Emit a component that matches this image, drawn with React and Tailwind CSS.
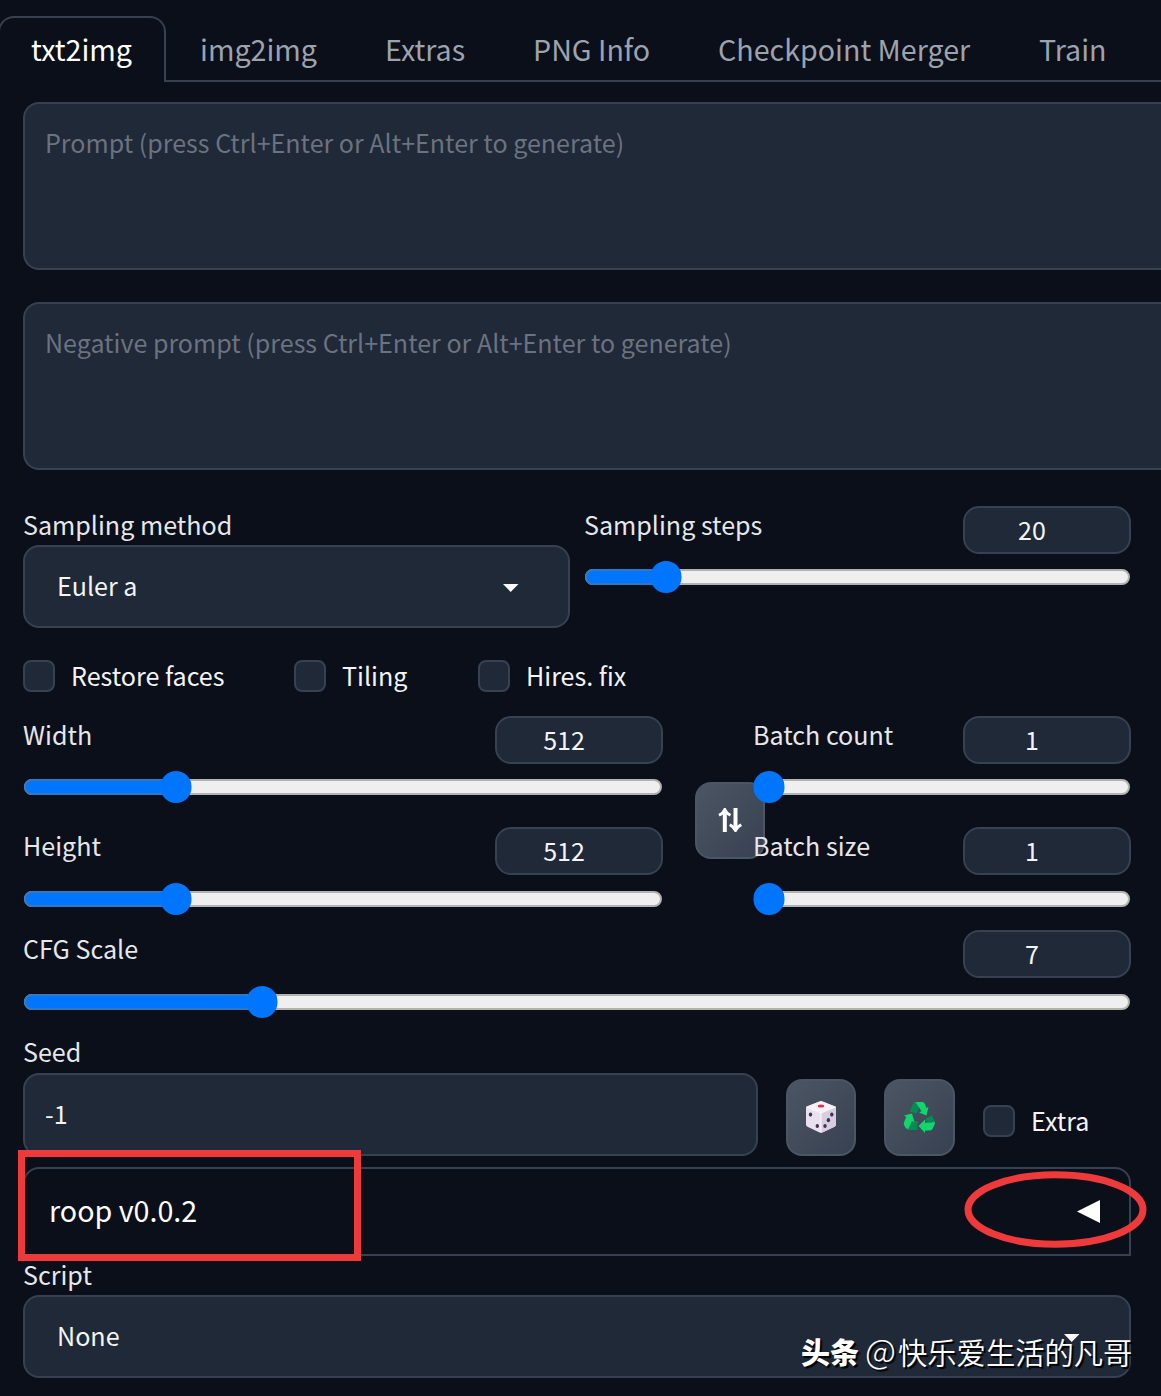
const tabs = [
  ['img2img', 'ml-[34px] w-[118px]'],
  ['Extras', 'ml-[67px] w-[80px]'],
  ['PNG Info', 'ml-[68px] w-[117px]'],
  ['Checkpoint Merger', 'ml-[68px] w-[252px]'],
  ['Train', 'ml-[69px] w-[67px]'],
];

const Label = ({ children, className = '' }) => (
  <div className={`h-9 whitespace-nowrap text-[25.08px] leading-9 text-[#e5e7eb] ${className}`}>{children}</div>
);

const NumberBox = ({ value }) => (
  <div className="flex h-12 w-[168px] shrink-0 justify-center rounded-2xl border-2 border-[#374151] bg-[#1f2937] pr-[30px] text-[25px] leading-[42px] text-[#f3f4f6]">
    {value}
  </div>
);

const Track = ({ thumb }) => (
  <div className="relative mx-px flex h-4 items-center">
    <div className="relative h-4 w-full overflow-hidden rounded-full border-2 border-[#b2b2b2] bg-[#efefef]" />
    <div className="absolute left-0 h-4 rounded-l-full border-2 border-r-0 border-[#3277c4] bg-[#0075ff]" style={{ width: thumb }} />
    <div className="absolute -top-2 h-8 w-[31px] -translate-x-1/2 rounded-full bg-[#0075ff]" style={{ left: thumb }} />
  </div>
);

const Slider = ({ label, value, thumb, gap = 'mt-[15px]' }) => (
  <div>
    <div className="flex h-12 justify-between">
      <Label>{label}</Label>
      <NumberBox value={value} />
    </div>
    <div className={gap}>
      <Track thumb={thumb} />
    </div>
  </div>
);

const Check = ({ label, className = '' }) => (
  <div className={`flex h-8 gap-4 ${className}`}>
    <div className="size-8 shrink-0 rounded-lg border-2 border-[#374151] bg-[#1f2937]" />
    <span className="whitespace-nowrap text-[25.08px] leading-[30px] text-[#f3f4f6]">{label}</span>
  </div>
);

const ToolButton = ({ children, className = '' }) => (
  <div className={`flex h-[77px] w-[70px] shrink-0 items-center justify-center rounded-2xl border-2 border-[#4b5563] bg-linear-to-br from-[#4b5563] to-[#374151] pb-[2px] ${className}`}>
    {children}
  </div>
);

const Caret = () => (
  <svg className="mt-[3px]" width="16" height="8" viewBox="0 0 16 8" fill="#f9fafb"><path d="M0 0h15.500L7.700 8z" /></svg>
);

const Dropdown = ({ value }) => (
  <div className="flex h-[83px] items-center justify-between rounded-2xl border-2 border-[#374151] bg-[#1f2937] pr-[49px] pl-8 text-[25.08px] text-[#f3f4f6]">
    <span className="pb-[2px]">{value}</span>
    <Caret />
  </div>
);

const Swap = () => (
  <svg width="24" height="24" viewBox="0 0 24 24" fill="none" stroke="#fff">
    <path d="M6.800 24V2M17.500 0V22" strokeWidth="4" />
    <path d="M1 7.200Q5.500 5 6.800 1.400Q8.100 5 12.500 7.200M11.700 16.800Q16 19 17.500 22.600Q18.900 19 23.300 16.800" strokeWidth="2.800" />
  </svg>
);

const Dice = () => (
  <svg width="32" height="34" viewBox="0 0 32 34">
    <path d="M14.500 1.500Q16 .8 17.500 1.500L29.800 6.300Q31 6.800 31 8V24.500Q31 26 29.500 26.700L17.500 32.500Q16 33.200 14.500 32.500L2.500 26.700Q1 26 1 24.500V8Q1 6.800 2.200 6.300Z" fill="#e9e1f0" />
    <path d="M31 8V24.500Q31 26 29.500 26.700L16 33V13L30.500 6.800Z" fill="#d8cee2" />
    <path d="M14.500 1.500Q16 .8 17.500 1.500L30.500 6.700L16 13L1.500 6.700Z" fill="#f6f1f8" />
    <path d="M1.500 7L16 13L30.500 7M16 13V32" stroke="#fbf8fd" strokeWidth="1" fill="none" />
    <ellipse cx="16" cy="6" rx="3.200" ry="1.500" fill="#dc3443" />
    <g fill="#40364c">
      <ellipse cx="5.500" cy="14.600" rx="1.700" ry="2.100" />
      <ellipse cx="12.300" cy="26" rx="1.700" ry="2.100" />
      <ellipse cx="26.800" cy="14.600" rx="1.700" ry="2.100" />
      <ellipse cx="23.400" cy="20.200" rx="1.700" ry="2.100" />
      <ellipse cx="20" cy="26" rx="1.700" ry="2.100" />
    </g>
  </svg>
);

const Recycle = () => (
  <svg className="mr-px" width="32" height="32" viewBox="0 0 32 32">
    <g fill="#078a56">
      <path d="M11.500 1H19L13.500 12.500L6.500 10.500L10 3Q10.500 1 11.500 1Z" />
      <path d="M1 22L3 20L5 24L7.500 20H14.500V29H6Q3.500 29 2.300 27Z" />
      <path d="M22.500 18L29 14L31.300 20Q32 22 31 24L29 25.500L25 23Z" />
    </g>
    <g fill="#10d66c">
      <path d="M12.500 1H19.500Q21 1 22 3L23.500 7L25.500 6L23.500 14.500L16 11.500L18.500 10.200Z" />
      <path d="M1 14.500L9 12.500L11.500 21L9 20L5 28.300Q3 28 1.300 24.500Q.3 22.500 1.300 20.500L3.300 16Z" />
      <path d="M15.500 25L22 18.500V21.700H28.500L31.700 20.500Q32.200 22.700 31.200 24.500L29.500 28Q28.500 29.500 26 29.500H22V32Z" />
    </g>
  </svg>
);

export default function App() {
  return (
    <div className="relative h-[1396px] w-[1161px] overflow-hidden bg-[#0b0f19] font-['Noto_Sans_CJK_SC',sans-serif]">
      <nav className="flex h-[82px] pt-4 text-[28.65px] leading-[66px]">
        <div className="-ml-[2px] h-[66px] w-[168px] shrink-0 rounded-t-2xl border-2 border-b-0 border-[#374151] pl-[31px] leading-[62px] text-white">txt2img</div>
        <div className="flex h-[66px] flex-1 border-b-2 border-[#374151] leading-[66px] text-[#9ca3af]">
          {tabs.map(([name, cls]) => (
            <div key={name} className={`shrink-0 whitespace-nowrap ${cls}`}>{name}</div>
          ))}
        </div>
      </nav>

      <div className="pl-[23px]">
        <div className="mt-5 h-[168px] rounded-l-2xl border-2 border-r-0 border-[#374151] bg-[#1f2937] pt-5 pl-5 text-[25.05px] leading-9 text-[#6b7280]">
          Prompt (press Ctrl+Enter or Alt+Enter to generate)
        </div>
        <div className="mt-8 h-[168px] rounded-l-2xl border-2 border-r-0 border-[#374151] bg-[#1f2937] pt-5 pl-5 text-[25.05px] leading-9 text-[#6b7280]">
          Negative prompt (press Ctrl+Enter or Alt+Enter to generate)
        </div>
      </div>

      <main className="ml-[23px] w-[1108px]">
        <section className="mt-9 flex h-[122px] gap-[14px]">
          <div className="w-[547px]">
            <Label className="mb-[3px]">Sampling method</Label>
            <Dropdown value="Euler a" />
          </div>
          <div className="w-[547px]">
            <Slider label="Sampling steps" value="20" thumb={81} />
          </div>
        </section>

        <section className="mt-8 flex">
          <Check label="Restore faces" className="w-[271px]" />
          <Check label="Tiling" className="w-[184px]" />
          <Check label="Hires. fix" />
        </section>

        <section className="mt-6 flex h-[192px]">
          <div className="flex w-[640px] flex-col gap-8">
            <Slider label="Width" value="512" thumb={152} />
            <Slider label="Height" value="512" thumb={152} gap="mt-4" />
          </div>
          <ToolButton className="mt-[66px] ml-8"><Swap /></ToolButton>
          <div className="relative -ml-3 flex w-[378px] flex-col gap-8">
            <Slider label="Batch count" value="1" thumb={15} />
            <Slider label="Batch size" value="1" thumb={15} gap="mt-4" />
          </div>
        </section>

        <section className="mt-[22px]">
          <Slider label="CFG Scale" value="7" thumb={238} gap="mt-4" />
        </section>

        <section className="mt-[23px] flex h-[123px]">
          <div className="w-[735px]">
            <Label className="mb-1">Seed</Label>
            <div className="h-[83px] rounded-2xl border-2 border-[#374151] bg-[#1f2937] pl-5 text-[25px] leading-[77px] text-[#f3f4f6]">-1</div>
          </div>
          <ToolButton className="mt-[46px] ml-7"><Dice /></ToolButton>
          <ToolButton className="mt-[46px] ml-7 w-[71px]"><Recycle /></ToolButton>
          <Check label="Extra" className="mt-[72px] ml-7" />
        </section>

        <section className="mt-[11px] flex h-[89px] items-center justify-between rounded-t-2xl border-2 border-[#374151] pr-[29px] pl-6 text-[28.65px] text-white">
          <span className="pb-[2px]">roop v0.0.2</span>
          <svg width="23" height="23" viewBox="0 0 23 23" fill="#fff"><path d="M0 11.500L23 0V23z" /></svg>
        </section>

        <section>
          <Label className="mb-[3px]">Script</Label>
          <Dropdown value="None" />
        </section>
      </main>

      <div className="absolute top-[1150px] left-[18px] h-[111px] w-[343px] border-[7px] border-[#ef3a3c]" />
      <svg className="absolute top-[1170px] left-[963px]" width="186" height="80" viewBox="0 0 186 80" fill="none" stroke="#ef3a3c" strokeWidth="7">
        <ellipse cx="92.500" cy="39.500" rx="87.500" ry="34.800" />
      </svg>
      <div className="absolute top-[1340px] -left-[10px] h-[64px] w-[1200px] rounded-bl-[24px] border-b-2 border-l-2 border-[#374151]" />
      <div className="absolute top-[1331px] left-[801px] flex whitespace-nowrap text-[29.3px] leading-10 text-white [text-shadow:2px_2px_1px_#000]">
        <b className="w-[64px] text-[29px] font-black">头条</b>
        <span className="-mt-px w-[33px] text-[34px] font-light">@</span>
        <span className="font-[350]">快乐爱生活的凡哥</span>
      </div>
    </div>
  );
}
